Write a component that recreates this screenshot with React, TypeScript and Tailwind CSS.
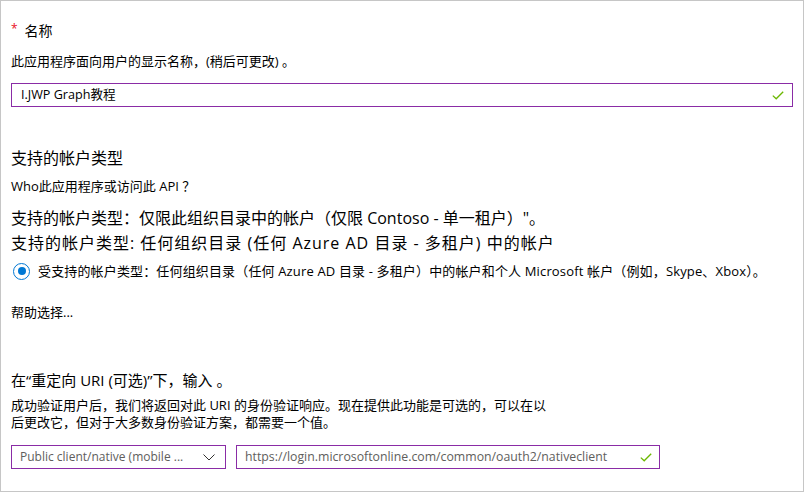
import type { ReactNode } from "react";

const font = "font-['Open_Sans','Noto_Sans_CJK_SC',sans-serif]";

function CheckMark() {
  return (
    <svg viewBox="0 0 12 9" className="h-[9px] w-[12px]" fill="none" aria-hidden="true">
      <path d="M0.8 4.6L4.2 7.8L11.2 0.8" stroke="#6bb700" strokeWidth="1.3" />
    </svg>
  );
}

function FieldBox({ className, children }: { className: string; children: ReactNode }) {
  return (
    <div
      className={`flex h-[24px] items-center border border-[#8a2ca6] bg-white ${className}`}
    >
      {children}
    </div>
  );
}

export default function App() {
  return (
    <div
      className={`h-[492px] w-[804px] overflow-hidden border border-[#c6c6c6] bg-white pl-[10px] pr-[10px] text-black ${font}`}
    >
      {/* 名称 */}
      <div className="mt-[20px] flex items-center text-[14px] leading-[20px]">
        <span className="mr-[7px] -mt-[4px] text-[12px] leading-none text-[#e81123]">*</span>
        <span>名称</span>
      </div>
      <p className="mt-[11px] text-[13px] leading-[18px]">
        此应用程序面向用户的显示名称，(稍后可更改) 。
      </p>
      <FieldBox className="mt-[13px] w-[782px] justify-between pl-[9px] pr-[8px]">
        <span className="text-[12.6px] leading-[18px]">I.JWP Graph教程</span>
        <CheckMark />
      </FieldBox>

      {/* 帐户类型 */}
      <h3 className="mt-[40px] text-[16px] leading-[22px]">支持的帐户类型</h3>
      <p className="mt-[8px] text-[13px] leading-[18px]">Who此应用程序或访问此 API ？</p>
      <p className="mt-[11px] text-[16px] leading-[25px]">
        支持的帐户类型：仅限此组织目录中的帐户（仅限 Contoso - 单一租户）"。
      </p>
      <p className="text-[16px] leading-[25px] tracking-[1px]">
        支持的帐户类型: 任何组织目录 (任何 Azure AD 目录 - 多租户) 中的帐户
      </p>
      <div className="mt-[5px] flex h-[20px] items-center">
        <span className="ml-[2px] flex h-[17px] w-[17px] items-center justify-center rounded-full border-[1.5px] border-[#0078d4]">
          <span className="h-[8px] w-[8px] rounded-full bg-[#0078d4]" />
        </span>
        <span className="ml-[8px] text-[13px] leading-[18px] tracking-[0.15px]">
          受支持的帐户类型：任何组织目录（任何 Azure AD 目录 - 多租户）中的帐户和个人 Microsoft 帐户（例如，Skype、Xbox）。
        </span>
      </div>
      <p className="mt-[22px] text-[13px] leading-[18px]">帮助选择...</p>

      {/* 重定向 URI */}
      <p className="mt-[48px] text-[15px] leading-[22px]">在“重定向 URI (可选)”下，输入 。</p>
      <p className="mt-[6px] text-[13px] leading-[17px]">
        成功验证用户后，我们将返回对此 URI 的身份验证响应。现在提供此功能是可选的，可以在以
        <br />
        后更改它，但对于大多数身份验证方案，都需要一个值。
      </p>
      <div className="mt-[14px] flex gap-[10px]">
        <FieldBox className="w-[215px] justify-between pl-[8px] pr-[10px]">
          <span className="text-[12px] leading-[18px] text-[#605e5c]">Public client/native (mobile ...</span>
          <svg viewBox="0 0 12 7" className="h-[7px] w-[12px]" fill="none" aria-hidden="true">
            <path d="M0.5 0.5L6 6L11.5 0.5" stroke="#323130" strokeWidth="1" />
          </svg>
        </FieldBox>
        <FieldBox className="w-[424px] justify-between pl-[8px] pr-[7px]">
          <span className="text-[12.3px] leading-[18px] text-[#605e5c]">
            https://login.microsoftonline.com/common/oauth2/nativeclient
          </span>
          <CheckMark />
        </FieldBox>
      </div>
    </div>
  );
}
